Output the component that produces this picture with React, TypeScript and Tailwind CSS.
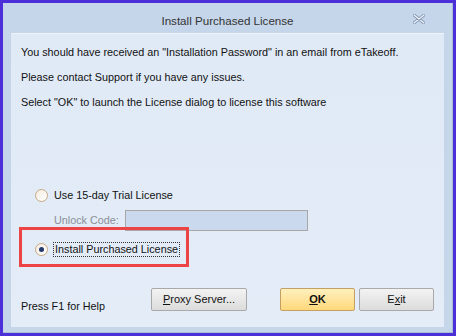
import React from "react";

const font = { fontFamily: '"Liberation Sans", Arial, sans-serif' };

function Radio({ checked }: { checked?: boolean }) {
  return (
    <div className="w-[13px] h-[13px] rounded-full border border-[#c8a982] bg-gradient-to-br from-[#f4ece2] to-[#ffffff] flex items-center justify-center shrink-0">
      {checked && <div className="w-[5px] h-[5px] rounded-full bg-[#23386b]" />}
    </div>
  );
}

export default function App() {
  return (
    <div className="w-[456px] h-[336px] bg-[#4b2fd9] p-[3px] pb-[3px]" style={font}>
      <div className="w-[450px] h-[330px] bg-[#c5d6ea] border-r border-b border-[#a9bdd6] flex flex-col">
        <div className="h-[30px] relative flex items-center justify-center text-[11.6px] text-[#333] shrink-0">
          <span className="mt-[5px]">Install Purchased License</span>
          <svg className="absolute left-[410px] top-[11px]" width="12" height="10" viewBox="0 0 12 10">
            <path d="M1 1 L11 9 M11 1 L1 9" stroke="#8496b4" strokeWidth="3" strokeLinecap="round" />
            <path d="M1 1 L11 9 M11 1 L1 9" stroke="#f2f6fb" strokeWidth="1.2" strokeLinecap="round" />
          </svg>
        </div>
        <div className="mx-[8px] h-[294px] bg-gradient-to-b from-[#e0eaf6] to-[#e3ecf7] text-[10.8px] text-[#111] relative shrink-0 border-t border-[#eef3fa]">
          <div className="pl-[10px] pt-[11px] flex flex-col gap-[11px] leading-[14px]">
            <div>You should have received an "Installation Password" in an email from eTakeoff.</div>
            <div>Please contact Support if you have any issues.</div>
            <div>Select "OK" to launch the License dialog to license this software</div>
          </div>
          <div className="pl-[24px] mt-[79px] flex items-center gap-[6px] h-[14px]">
            <Radio />
            <span>Use 15-day Trial License</span>
          </div>
          <div className="pl-[43px] mt-[8px] flex items-center h-[21px]">
            <span className="text-[#8a8f98] w-[71px]">Unlock Code:</span>
            <div className="w-[183px] h-[21px] bg-[#cad9ee] border border-[#a7a7a7]" />
          </div>
          <div className="pl-[24px] mt-[11px] flex items-center gap-[5px] h-[14px]">
            <Radio checked />
            <span className="whitespace-nowrap border border-dotted border-[#333] px-[1px] leading-[13px]">Install Purchased License</span>
          </div>
          <div className="absolute left-[8px] top-[193px] w-[170px] h-[40px] border-[3px] border-[#ec4444]" />
          <div className="mt-[32px] flex items-start">
            <span className="ml-[10px] mt-[10px] w-[130px]">Press F1 for Help</span>
            <button className="w-[96px] h-[23px] rounded-[2px] border border-[#a9a9a9] bg-gradient-to-b from-[#f3f3f3] to-[#dcdcdc] text-[11px] text-[#111]">
              <span className="underline">P</span>roxy Server...
            </button>
            <button className="ml-[33px] w-[75px] h-[23px] rounded-[2px] border border-[#c6a063] bg-gradient-to-b from-[#fff0bd] to-[#ffd87a] text-[11px] font-bold text-[#111]">
              <span className="underline">O</span>K
            </button>
            <button className="ml-[4px] w-[75px] h-[23px] rounded-[2px] border border-[#a9a9a9] bg-gradient-to-b from-[#f3f3f3] to-[#dcdcdc] text-[11px] text-[#111]">
              E<span className="underline">x</span>it
            </button>
          </div>
        </div>
      </div>
    </div>
  );
}
